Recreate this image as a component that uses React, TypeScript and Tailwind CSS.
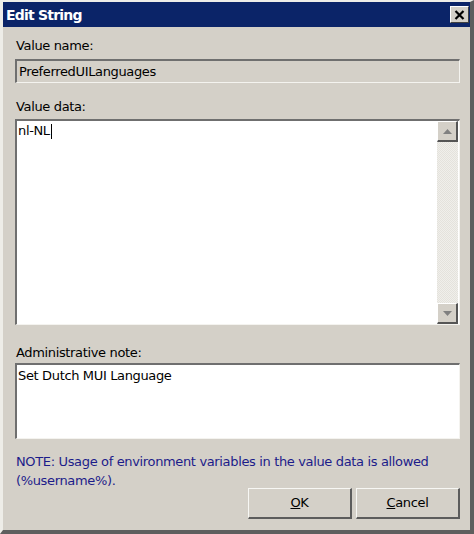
import React from "react";

const font = { fontFamily: "Tahoma, 'DejaVu Sans', sans-serif" };

function Sunken({ children, className = "" }: { children?: React.ReactNode; className?: string }) {
  return (
    <div className={`border-t-2 border-l-2 border-t-[#6f6f6f] border-l-[#6f6f6f] border-b border-r border-b-[#f4f3ef] border-r-[#f4f3ef] ${className}`}>
      {children}
    </div>
  );
}

function Btn({ children }: { children: React.ReactNode }) {
  return (
    <div className="w-[104px] h-[31px] shrink-0 border-t border-l border-t-[#f7f7f4] border-l-[#f7f7f4] border-b-2 border-r-2 border-b-[#5c5c5c] border-r-[#5c5c5c] bg-[#d4d0c8] flex items-center justify-center text-[13px] text-black">
      {children}
    </div>
  );
}

export default function App() {
  return (
    <div
      className="w-[474px] h-[534px] bg-[#d4d0c8] border-l-[3px] border-l-[#eeede8] border-t-[2px] border-t-[#eeede8] border-r-4 border-r-[#5e5e5e] border-b-4 border-b-[#5e5e5e] flex flex-col tracking-[-0.35px]"
      style={font}
    >
      <div className="h-[25px] shrink-0 bg-[#0b2468] flex items-center justify-between pl-[3px] pr-[1px]">
        <span className="text-white font-bold text-[14px] leading-none tracking-[-0.8px]">Edit String</span>
        <div className="w-[19px] h-[17px] bg-[#d4d0c8] border-t border-l border-t-white border-l-white border-b border-r border-b-[#404040] border-r-[#404040] flex items-center justify-center">
          <svg width="11" height="10" viewBox="0 0 11 10">
            <path d="M1.5 1 L9.5 9 M9.5 1 L1.5 9" stroke="#000" strokeWidth="2.2" />
          </svg>
        </div>
      </div>
      <div className="flex flex-col pl-[12px] pr-[10px] text-[13px] text-black">
        <div className="mt-[10px] h-[18px] leading-[18px] pl-[1px]">Value name:</div>
        <Sunken className="mt-[4px] h-[24px] bg-[#d4d0c8] flex items-center pl-[2px]">
          <span>PreferredUILanguages</span>
        </Sunken>
        <div className="mt-[15px] h-[18px] leading-[18px] pl-[1px]">Value data:</div>
        <Sunken className="mt-[3px] h-[206px] bg-white flex">
          <div className="flex-1 pl-[1px] pt-[2px] leading-[16px]">
            nl-NL<span className="inline-block w-[1px] h-[15px] bg-black align-middle ml-[1px]"></span>
          </div>
          <div className="w-[21px] flex flex-col bg-[repeating-conic-gradient(#f0efeb_0%_25%,#e4e2dc_0%_50%)] bg-[length:2px_2px] mr-[1px]">
            <div className="h-[21px] bg-[#d4d0c8] border-t border-l border-t-white border-l-white border-b-2 border-r-2 border-b-[#555] border-r-[#555] flex items-center justify-center">
              <svg width="9" height="5" viewBox="0 0 9 5"><path d="M0 5 L4.5 0 L9 5 Z" fill="#808080" /></svg>
            </div>
            <div className="flex-1"></div>
            <div className="h-[21px] bg-[#d4d0c8] border-t border-l border-t-white border-l-white border-b-2 border-r-2 border-b-[#555] border-r-[#555] flex items-center justify-center">
              <svg width="9" height="5" viewBox="0 0 9 5"><path d="M0 0 L9 0 L4.5 5 Z" fill="#808080" /></svg>
            </div>
          </div>
        </Sunken>
        <div className="mt-[19px] h-[18px] leading-[18px] pl-[1px]">Administrative note:</div>
        <Sunken className="mt-[1px] h-[76px] bg-white pl-[1px] pt-[3px] leading-[16px]">
          Set Dutch MUI Language
        </Sunken>
        <div className="mt-[13px] text-[#1c1c8a] leading-[19px] pl-[1px]">
          NOTE: Usage of environment variables in the value data is allowed
          <br />
          (%username%).
        </div>
        <div className="mt-[-2px] flex justify-end gap-[4px]">
          <Btn>
            <span><span className="underline">O</span>K</span>
          </Btn>
          <Btn>
            <span><span className="underline">C</span>ancel</span>
          </Btn>
        </div>
      </div>
    </div>
  );
}
